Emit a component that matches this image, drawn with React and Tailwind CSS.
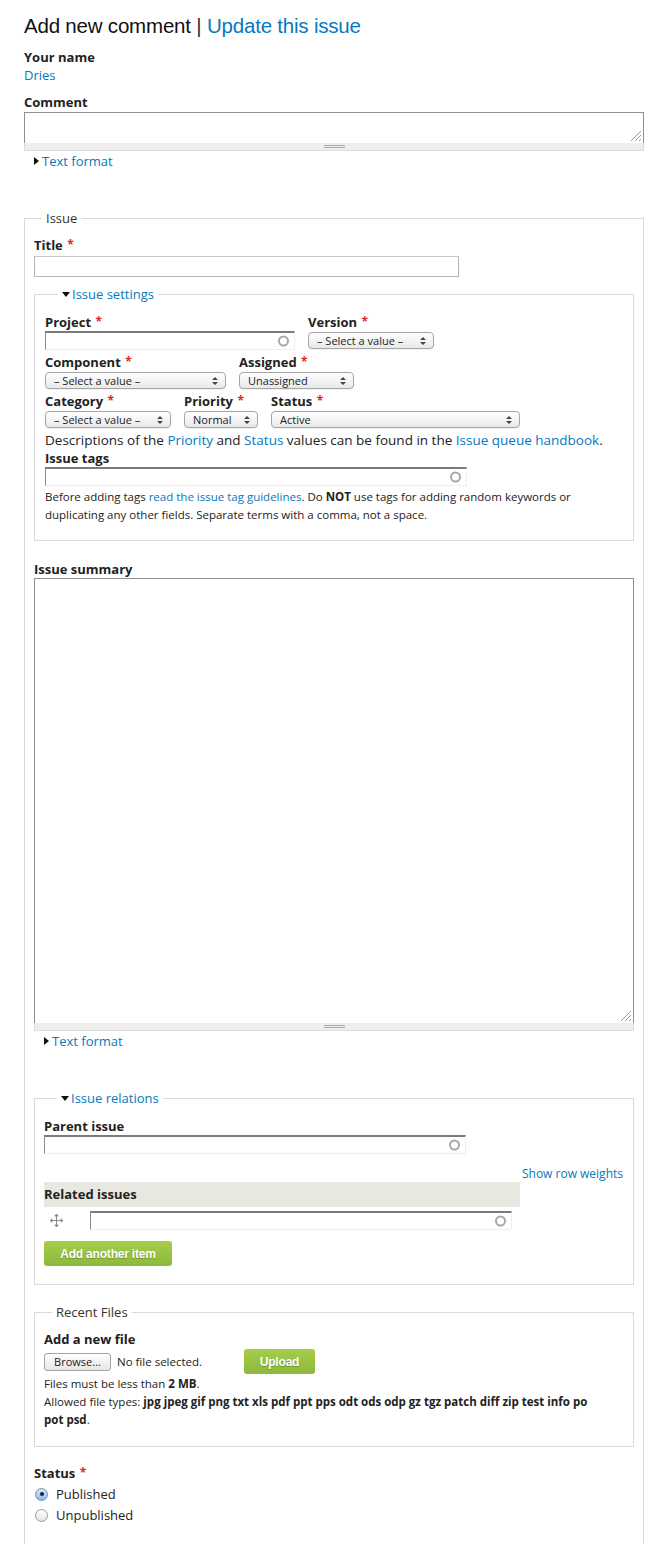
import React from 'react';

const body = { fontFamily: '"Open Sans", Lato, sans-serif' };
const helv = { fontFamily: '"Liberation Sans", Arial, sans-serif' };

const Req = () => <span className="text-[#e3261e] text-[12px] align-top ml-[1px]">*</span>;

const Label = ({ children, req, className = '' }) => (
  <div className={`font-bold text-[13px] leading-[18px] text-[#222] ${className}`}>
    {children}
    {req && <> <Req /></>}
  </div>
);

const Circle = () => (
  <span className="absolute right-[5px] top-1/2 -translate-y-1/2 w-[11px] h-[11px] rounded-full border-[2px] border-[#a8a8a8]" />
);

const AutoInput = ({ className = '' }) => (
  <div
    className={`relative h-[19px] border-t-[2px] border-l border-t-[#7b7b7b] border-l-[#8a8a8a] border-r border-b border-r-[#eee] border-b-[#eee] bg-white ${className}`}
  >
    <Circle />
  </div>
);

const Arrows = () => (
  <svg width="6" height="9" viewBox="0 0 6 9" className="absolute right-[7px] top-1/2 -translate-y-1/2">
    <path d="M0 3.5 L3 0.5 L6 3.5 Z M0 5.5 L3 8.5 L6 5.5 Z" fill="#444" />
  </svg>
);

const Select = ({ children, className = '' }) => (
  <div
    className={`relative h-[17px] rounded-[4px] border border-[#a5a5a5] bg-gradient-to-b from-white to-[#e9e9e9] text-[11px] leading-[15px] text-[#222] pl-[8px] whitespace-nowrap shadow-[0_1px_0_rgba(0,0,0,0.05)] ${className}`}
  >
    {children}
    <Arrows />
  </div>
);

const ResizeHandle = () => (
  <svg width="12" height="12" viewBox="0 0 12 12" className="absolute right-[1px] bottom-[1px]">
    <path d="M11 1 L1 11 M11 5 L5 11 M11 9 L9 11" stroke="#9a9a9a" strokeWidth="1" />
  </svg>
);

const Grippie = () => (
  <div className="h-[8px] bg-[#eee] border-b border-[#ddd] border-x flex items-center justify-center">
    <div className="w-[21px] h-[3px] border-y border-[#aaa]" />
  </div>
);

const TextArea = ({ h }) => (
  <div>
    <div className={`relative border border-[#8f8f8f] border-b-0 bg-white ${h}`}>
      <ResizeHandle />
    </div>
    <Grippie />
  </div>
);

const TextFormat = ({ className = '' }) => (
  <div className={`flex items-center text-[13px] leading-[18px] ${className}`}>
    <svg width="5" height="8" viewBox="0 0 5 8" className="mr-[3px]">
      <path d="M0 0 L5 4 L0 8 Z" fill="#111" />
    </svg>
    <a className="text-[#0678be]">Text format</a>
  </div>
);

const Legend = ({ children, open }) => (
  <legend className="ml-[13px] px-[4px] text-[13px] leading-[18px]">
    {open ? (
      <span className="flex items-center">
        <svg width="8" height="5" viewBox="0 0 8 5" className="mr-[2px] mt-[1px]">
          <path d="M0 0 L8 0 L4 5 Z" fill="#111" />
        </svg>
        <a className="text-[#0678be]">{children}</a>
      </span>
    ) : (
      <span className="text-[#333]">{children}</span>
    )}
  </legend>
);

const Link = ({ children }) => <a className="text-[#0678be]">{children}</a>;

const GreenButton = ({ children, className = '' }) => (
  <button
    className={`h-[25px] rounded-[3px] bg-gradient-to-b from-[#a6cc4b] to-[#8db93c] text-white font-bold text-[12px] tracking-[-0.2px] [text-shadow:0_1px_1px_rgba(0,0,0,0.25)] ${className}`}
    style={helv}
  >
    {children}
  </button>
);

export default function App() {
  return (
    <div className="bg-white w-[661px] h-[1544px] overflow-hidden text-[#222]" style={body}>
      <div className="ml-[24px] w-[620px]">
        <h2 className="pt-[13px] text-[20.5px] leading-[26px] text-[#111] tracking-[-0.2px]" style={helv}>
          Add new comment <span className="text-[#333]">|</span> <Link>Update this issue</Link>
        </h2>

        <Label className="mt-[9px]">Your name</Label>
        <div className="text-[13px] leading-[18px] text-[#0678be]">Dries</div>

        <Label className="mt-[9px]">Comment</Label>
        <div className="mt-[1px]">
          <TextArea h="h-[31px]" />
        </div>
        <TextFormat className="ml-[10px] mt-[1px]" />

        <fieldset className="mt-[39px] border border-[#dadada] pl-[9px] pr-[9px] pb-[14px]">
          <legend className="ml-[8px] px-[4px] text-[13px] leading-[18px] text-[#333]">Issue</legend>

          <Label className="mt-[9px]" req>Title</Label>
          <div className="mt-[2px] w-[425px] h-[21px] border border-[#b4b4b4] border-t-[#c9c9c9] bg-white" />

          <fieldset className="mt-[8px] border border-[#dadada] pl-[10px] pr-[10px] pb-[16px]">
            <Legend open>Issue settings</Legend>

            <div className="flex mt-[10px]">
              <div className="w-[263px]">
                <Label req>Project</Label>
                <AutoInput className="w-[250px]" />
              </div>
              <div>
                <Label req>Version</Label>
                <Select className="w-[126px] mt-[1px]">– Select a value –</Select>
              </div>
            </div>

            <div className="flex mt-[3px]">
              <div className="w-[194px]">
                <Label req>Component</Label>
                <Select className="w-[181px] mt-[1px]">– Select a value –</Select>
              </div>
              <div>
                <Label req>Assigned</Label>
                <Select className="w-[115px] mt-[1px]">Unassigned</Select>
              </div>
            </div>

            <div className="flex mt-[3px]">
              <div className="w-[139px]">
                <Label req>Category</Label>
                <Select className="w-[126px] mt-[1px]">– Select a value –</Select>
              </div>
              <div className="w-[87px]">
                <Label req>Priority</Label>
                <Select className="w-[74px] mt-[1px]">Normal</Select>
              </div>
              <div>
                <Label req>Status</Label>
                <Select className="w-[249px] mt-[1px]">Active</Select>
              </div>
            </div>

            <div className="mt-[3px] text-[13.5px] leading-[18px] text-[#222] whitespace-nowrap">
              Descriptions of the <Link>Priority</Link> and <Link>Status</Link> values can be found in the{' '}
              <Link>Issue queue handbook</Link>.
            </div>

            <Label>Issue tags</Label>
            <AutoInput className="w-[422px]" />
            <div className="mt-[2px] text-[11.5px] leading-[18px] text-[#222] w-[545px]">
              Before adding tags <Link>read the issue tag guidelines</Link>. Do <b>NOT</b> use tags for adding random
              keywords or duplicating any other fields. Separate terms with a comma, not a space.
            </div>
          </fieldset>

          <Label className="mt-[19px]">Issue summary</Label>
          <TextArea h="h-[445px]" />
          <TextFormat className="ml-[10px] mt-[1px]" />

          <fieldset className="mt-[39px] border border-[#dadada] pl-[9px] pr-[10px] pb-[18px]">
            <Legend open>Issue relations</Legend>

            <Label className="mt-[10px]">Parent issue</Label>
            <AutoInput className="w-[422px]" />

            <div className="mt-[11px] text-right text-[12px] leading-[17px]">
              <Link>Show row weights</Link>
            </div>
            <div className="w-[476px]">
              <div className="h-[25px] bg-[#e9e8e0] flex items-center font-bold text-[13px] text-[#222]">
                Related issues
              </div>
              <div className="flex items-center h-[26px]">
                <div className="w-[46px] pl-[6px] flex items-center">
                  <svg width="13" height="13" viewBox="0 0 14 14">
                    <path
                      d="M7 0.5 L7 13.5 M0.5 7 L13.5 7 M5 2.5 L7 0.5 L9 2.5 M5 11.5 L7 13.5 L9 11.5 M2.5 5 L0.5 7 L2.5 9 M11.5 5 L13.5 7 L11.5 9"
                      stroke="#8a8a8a"
                      strokeWidth="1.2"
                      fill="none"
                    />
                  </svg>
                </div>
                <AutoInput className="w-[422px]" />
              </div>
            </div>

            <GreenButton className="mt-[8px] w-[128px]">Add another item</GreenButton>
          </fieldset>

          <fieldset className="mt-[18px] border border-[#dadada] pl-[9px] pr-[10px] pb-[17px]">
            <legend className="ml-[8px] px-[4px] text-[13px] leading-[18px] text-[#333]">Recent Files</legend>

            <Label className="mt-[9px]">Add a new file</Label>
            <div className="flex items-center mt-[1px]">
              <div className="h-[18px] w-[67px] rounded-[3px] border border-[#a5a5a5] bg-gradient-to-b from-white to-[#e6e6e6] text-[11px] leading-[16px] text-center text-[#222]">
                Browse...
              </div>
              <span className="ml-[6px] text-[11.5px] text-[#222] w-[127px]">No file selected.</span>
              <GreenButton className="w-[71px]">Upload</GreenButton>
            </div>
            <div className="mt-[1px] text-[11.5px] leading-[18px] text-[#222]">
              Files must be less than <b>2 MB</b>.
            </div>
            <div className="text-[11.5px] leading-[18px] text-[#222] w-[555px]">
              Allowed file types: <b>jpg jpeg gif png txt xls pdf ppt pps odt ods odp gz tgz patch diff zip test info po pot psd</b>.
            </div>
          </fieldset>

          <Label className="mt-[17px]" req>Status</Label>
          <div className="flex items-center mt-[3px] text-[13px] leading-[18px]">
            <span className="w-[13px] h-[13px] rounded-full border border-[#6f8fb5] bg-gradient-to-b from-[#d7e8fb] to-[#8fb7e6] flex items-center justify-center mr-[8px] ml-[1px]">
              <span className="w-[4px] h-[4px] rounded-full bg-[#222]" />
            </span>
            Published
          </div>
          <div className="flex items-center mt-[3px] text-[13px] leading-[18px]">
            <span className="w-[13px] h-[13px] rounded-full border border-[#9a9a9a] bg-gradient-to-b from-white to-[#e4e4e4] mr-[8px] ml-[1px]" />
            Unpublished
          </div>
          <div className="h-[40px]" />
        </fieldset>
      </div>
    </div>
  );
}
